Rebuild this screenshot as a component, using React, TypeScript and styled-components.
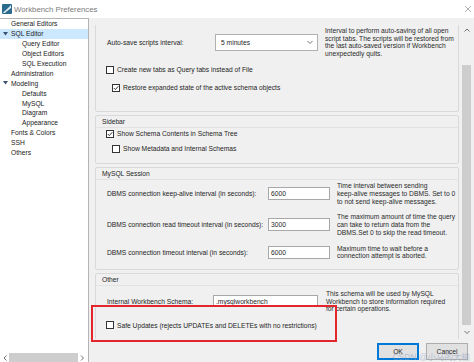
import React from "react";
import styled, { createGlobalStyle } from "styled-components";

const GlobalStyle = createGlobalStyle`
  html, body { margin: 0; padding: 0; background: #f0f0f0; }
  body {
    width: 474px; height: 362px; overflow: hidden;
    font-family: "Liberation Sans", Arial, "Noto Sans CJK SC", sans-serif;
  }
  * { box-sizing: border-box; }
`;

const Window = styled.div`
  position: relative;
  width: 474px;
  height: 362px;
  display: flex;
  flex-direction: column;
  background: #f0f0f0;
  overflow: hidden;
  font-size: 6.7px;
  color: #1e1e1e;
`;

const TitleBar = styled.div`
  height: 18px;
  flex: none;
  background: #ffffff;
  display: flex;
  align-items: center;
  padding: 0 2px 0 2px;
  gap: 2px;
`;

const TitleText = styled.span`
  flex: 1;
  font-size: 7.8px;
  color: #7a7a7a;
  white-space: nowrap;
`;

const Body = styled.div`
  flex: 1;
  min-height: 0;
  display: flex;
`;

const Tree = styled.div`
  width: 89px;
  flex: none;
  background: #ffffff;
  border-top: 1px solid #b4b4b4;
  border-right: 1px solid #b4b4b4;
  display: flex;
  flex-direction: column;
`;

const TreeItem = styled.div<{ $level: number; $selected?: boolean }>`
  height: 9.9px;
  display: flex;
  align-items: center;
  padding-left: ${(p) => (p.$level === 0 ? 3 : 22)}px;
  background: ${(p) => (p.$selected ? "#cce8ff" : "transparent")};
  white-space: nowrap;
  color: #1a1a1a;
`;

const Toggle = styled.span`
  width: 8px;
  flex: none;
  display: flex;
  align-items: center;
`;

const HScroll = styled.div`
  margin-top: auto;
  height: 9px;
  flex: none;
  display: flex;
  align-items: center;
  padding: 0 4px 0 3px;
  gap: 1px;
`;

const HThumb = styled.div`
  width: 69px;
  height: 100%;
  background: #cdcdcd;
`;

const Spacer = styled.div`
  flex: 1;
`;

const RightPane = styled.div`
  flex: 1;
  min-width: 0;
  display: flex;
  flex-direction: column;
  gap: 4px;
  padding: 7px 2px 2px 4px;
`;

const ScrollView = styled.div`
  flex: 1;
  min-height: 0;
  display: flex;
`;

const Viewport = styled.div`
  flex: 1;
  min-width: 0;
  overflow: hidden;
  padding: 0 2px;
`;

const ScrollContent = styled.div<{ $offset: number }>`
  margin-top: ${(p) => -p.$offset}px;
  display: flex;
  flex-direction: column;
  gap: 3px;
`;

const Group = styled.div`
  border: 1px solid #d9d9d9;
  border-radius: 2px;
  background: #f0f0f0;
`;

const GroupHeader = styled.div`
  height: 12px;
  line-height: 12px;
  padding: 0 6px;
  border-bottom: 1px solid #e3e3e3;
  color: #1e1e1e;
`;

const GroupBody = styled.div<{ $top: number; $bottom: number; $gap: number }>`
  display: flex;
  flex-direction: column;
  gap: ${(p) => p.$gap}px;
  padding: ${(p) => p.$top}px 0 ${(p) => p.$bottom}px 0;
`;

const FieldRow = styled.div`
  display: flex;
  align-items: center;
  padding-left: 11px;
`;

const FieldLabel = styled.div<{ $width: number }>`
  width: ${(p) => p.$width}px;
  flex: none;
  white-space: nowrap;
  color: #1e1e1e;
`;

const TextInput = styled.div<{ $width: number; $height: number }>`
  width: ${(p) => p.$width}px;
  height: ${(p) => p.$height}px;
  flex: none;
  background: #ffffff;
  border: 1px solid #a8a8a8;
  padding-left: 2px;
  display: flex;
  align-items: center;
  color: #1e1e1e;
`;

const Select = styled.div`
  width: 103px;
  height: 17px;
  flex: none;
  background: #ffffff;
  border: 1px solid #b0b0b0;
  padding: 0 4px 0 5px;
  display: flex;
  align-items: center;
  justify-content: space-between;
`;

const Description = styled.div<{ $gap: number }>`
  margin-left: ${(p) => p.$gap}px;
  line-height: 7.7px;
  color: #2a2a2a;
  white-space: nowrap;
`;

const Line = styled.span`
  display: block;
`;

const CheckRow = styled.div<{ $indent: number; $top?: number }>`
  height: 10px;
  display: flex;
  align-items: center;
  gap: 3px;
  margin-top: ${(p) => p.$top ?? 0}px;
  padding-left: ${(p) => 10 + p.$indent}px;
  white-space: nowrap;
`;

const Box = styled.span`
  width: 8px;
  height: 8px;
  flex: none;
  border: 1px solid #333333;
  background: #ffffff;
  display: flex;
  align-items: center;
  justify-content: center;
`;

const VScroll = styled.div`
  width: 11px;
  flex: none;
  display: flex;
  flex-direction: column;
  background: #f0f0f0;
`;

const VArrow = styled.div<{ $h: number }>`
  height: ${(p) => p.$h}px;
  flex: none;
  display: flex;
  align-items: center;
  justify-content: center;
`;

const VTrack = styled.div`
  flex: 1;
  display: flex;
  flex-direction: column;
  padding-top: 29px;
`;

const VThumb = styled.div`
  flex: 1;
  margin: 0 1px;
  background: #cdcdcd;
`;

const ButtonRow = styled.div`
  height: 17px;
  flex: none;
  display: flex;
  justify-content: flex-end;
  gap: 7px;
  padding-right: 4px;
`;

const Button = styled.div<{ $default?: boolean }>`
  width: 42px;
  height: 17px;
  display: flex;
  align-items: center;
  justify-content: center;
  background: #e1e1e1;
  border: ${(p) => (p.$default ? "2px solid #0078d7" : "1px solid #adadad")};
  color: #1e1e1e;
`;

const Annotation = styled.div`
  position: absolute;
  left: 91px;
  top: 305px;
  width: 246px;
  height: 37px;
  border: 2px solid #e3262b;
  pointer-events: none;
`;

const Watermark = styled.div`
  position: absolute;
  right: 4px;
  bottom: 0px;
  font-size: 8.5px;
  line-height: 10px;
  color: rgba(140, 160, 195, 0.55);
  font-family: "Liberation Sans", "Noto Sans CJK SC", sans-serif;
  white-space: nowrap;
  pointer-events: none;
`;

const AppIcon = () => (
  <svg width="10" height="10" viewBox="0 0 10 10">
    <rect x="0" y="0" width="10" height="10" rx="1" fill="#2a6a8f" />
    <path d="M1 9 C3 6.5 5 5.5 9 1 L9 4 C6.5 6 4.5 7.5 3 9 Z" fill="#dbe9f2" />
  </svg>
);

const CloseIcon = () => (
  <svg width="8" height="8" viewBox="0 0 8 8">
    <path d="M1 1 L7 7 M7 1 L1 7" stroke="#9a9a9a" strokeWidth="0.8" />
  </svg>
);

const Triangle = () => (
  <svg width="5" height="4" viewBox="0 0 5 4">
    <path d="M0 0 L5 0 L2.5 3.5 Z" fill="#3b4f72" />
  </svg>
);

const Chevron = ({ dir, color = "#606060" }: { dir: "up" | "down" | "left" | "right"; color?: string }) => {
  const d =
    dir === "up"
      ? "M0.5 3.5 L3 1 L5.5 3.5"
      : dir === "down"
      ? "M0.5 1 L3 3.5 L5.5 1"
      : dir === "left"
      ? "M3.5 0.5 L1 3 L3.5 5.5"
      : "M1 0.5 L3.5 3 L1 5.5";
  const w = dir === "up" || dir === "down" ? 6 : 4.5;
  const h = dir === "up" || dir === "down" ? 4.5 : 6;
  return (
    <svg width={w} height={h} viewBox={`0 0 ${w} ${h}`}>
      <path d={d} stroke={color} strokeWidth="0.9" fill="none" />
    </svg>
  );
};

const Check = ({ checked }: { checked?: boolean }) => (
  <Box>
    {checked && (
      <svg width="6" height="6" viewBox="0 0 6 6">
        <path d="M0.8 3 L2.4 4.6 L5.3 1.2" stroke="#222" strokeWidth="0.9" fill="none" />
      </svg>
    )}
  </Box>
);

const Desc = ({ lines, gap }: { lines: string[]; gap: number }) => (
  <Description $gap={gap}>
    {lines.map((l) => (
      <Line key={l}>{l}</Line>
    ))}
  </Description>
);

const treeItems: { label: string; level: number; toggle?: boolean; selected?: boolean }[] = [
  { label: "General Editors", level: 0 },
  { label: "SQL Editor", level: 0, toggle: true, selected: true },
  { label: "Query Editor", level: 1 },
  { label: "Object Editors", level: 1 },
  { label: "SQL Execution", level: 1 },
  { label: "Administration", level: 0 },
  { label: "Modeling", level: 0, toggle: true },
  { label: "Defaults", level: 1 },
  { label: "MySQL", level: 1 },
  { label: "Diagram", level: 1 },
  { label: "Appearance", level: 1 },
  { label: "Fonts & Colors", level: 0 },
  { label: "SSH", level: 0 },
  { label: "Others", level: 0 },
];

export default function App() {
  return (
    <>
      <GlobalStyle />
      <Window>
        <TitleBar>
          <AppIcon />
          <TitleText>Workbench Preferences</TitleText>
          <CloseIcon />
        </TitleBar>
        <Body>
          <Tree>
            {treeItems.map((it) => (
              <TreeItem key={it.label} $level={it.level} $selected={it.selected}>
                {it.level === 0 && <Toggle>{it.toggle && <Triangle />}</Toggle>}
                {it.label}
              </TreeItem>
            ))}
            <HScroll>
              <Chevron dir="left" />
              <HThumb />
              <Spacer />
              <Chevron dir="right" />
            </HScroll>
          </Tree>
          <RightPane>
            <ScrollView>
              <Viewport>
                <ScrollContent $offset={5}>
                  <Group>
                    <GroupBody $top={6} $bottom={18} $gap={0}>
                      <FieldRow>
                        <FieldLabel $width={108}>Auto-save scripts interval:</FieldLabel>
                        <Select>
                          <span>5 minutes</span>
                          <Chevron dir="down" color="#666" />
                        </Select>
                        <Desc
                          gap={7}
                          lines={[
                            "Interval to perform auto-saving of all open",
                            "script tabs. The scripts will be restored from",
                            "the last auto-saved version if Workbench",
                            "unexpectedly quits.",
                          ]}
                        />
                      </FieldRow>
                      <CheckRow $indent={0} $top={7}>
                        <Check />
                        Create new tabs as Query tabs instead of File
                      </CheckRow>
                      <CheckRow $indent={6} $top={8}>
                        <Check checked />
                        Restore expanded state of the active schema objects
                      </CheckRow>
                    </GroupBody>
                  </Group>

                  <Group>
                    <GroupHeader>Sidebar</GroupHeader>
                    <GroupBody $top={1} $bottom={9} $gap={5}>
                      <CheckRow $indent={0}>
                        <Check checked />
                        Show Schema Contents in Schema Tree
                      </CheckRow>
                      <CheckRow $indent={6}>
                        <Check />
                        Show Metadata and Internal Schemas
                      </CheckRow>
                    </GroupBody>
                  </Group>

                  <Group>
                    <GroupHeader>MySQL Session</GroupHeader>
                    <GroupBody $top={2.5} $bottom={9} $gap={8}>
                      <FieldRow>
                        <FieldLabel $width={161}>DBMS connection keep-alive interval (in seconds):</FieldLabel>
                        <TextInput $width={62} $height={13}>6000</TextInput>
                        <Desc
                          gap={7}
                          lines={[
                            "Time interval between sending",
                            "keep-alive messages to DBMS. Set to 0",
                            "to not send keep-alive messages.",
                          ]}
                        />
                      </FieldRow>
                      <FieldRow>
                        <FieldLabel $width={161}>DBMS connection read timeout interval (in seconds):</FieldLabel>
                        <TextInput $width={62} $height={13}>3000</TextInput>
                        <Desc
                          gap={7}
                          lines={[
                            "The maximum amount of time the query",
                            "can take to return data from the",
                            "DBMS.Set 0 to skip the read timeout.",
                          ]}
                        />
                      </FieldRow>
                      <FieldRow>
                        <FieldLabel $width={161}>DBMS connection timeout interval (in seconds):</FieldLabel>
                        <TextInput $width={62} $height={13}>6000</TextInput>
                        <Desc
                          gap={7}
                          lines={["Maximum time to wait before a", "connection attempt is aborted."]}
                        />
                      </FieldRow>
                    </GroupBody>
                  </Group>

                  <Group>
                    <GroupHeader>Other</GroupHeader>
                    <GroupBody $top={4} $bottom={20} $gap={7}>
                      <FieldRow>
                        <FieldLabel $width={106}>Internal Workbench Schema:</FieldLabel>
                        <TextInput $width={105} $height={12}>.mysqlworkbench</TextInput>
                        <Desc
                          gap={8}
                          lines={[
                            "This schema will be used by MySQL",
                            "Workbench to store information required",
                            "for certain operations.",
                          ]}
                        />
                      </FieldRow>
                      <CheckRow $indent={0}>
                        <Check />
                        Safe Updates (rejects UPDATEs and DELETEs with no restrictions)
                      </CheckRow>
                    </GroupBody>
                  </Group>
                </ScrollContent>
              </Viewport>
              <VScroll>
                <VArrow $h={11}>
                  <Chevron dir="up" />
                </VArrow>
                <VTrack>
                  <VThumb />
                </VTrack>
                <VArrow $h={14}>
                  <Chevron dir="down" />
                </VArrow>
              </VScroll>
            </ScrollView>
            <ButtonRow>
              <Button $default>OK</Button>
              <Button>Cancel</Button>
            </ButtonRow>
          </RightPane>
        </Body>
        <Annotation />
        <Watermark>CSDN @小马的大榆</Watermark>
      </Window>
    </>
  );
}
